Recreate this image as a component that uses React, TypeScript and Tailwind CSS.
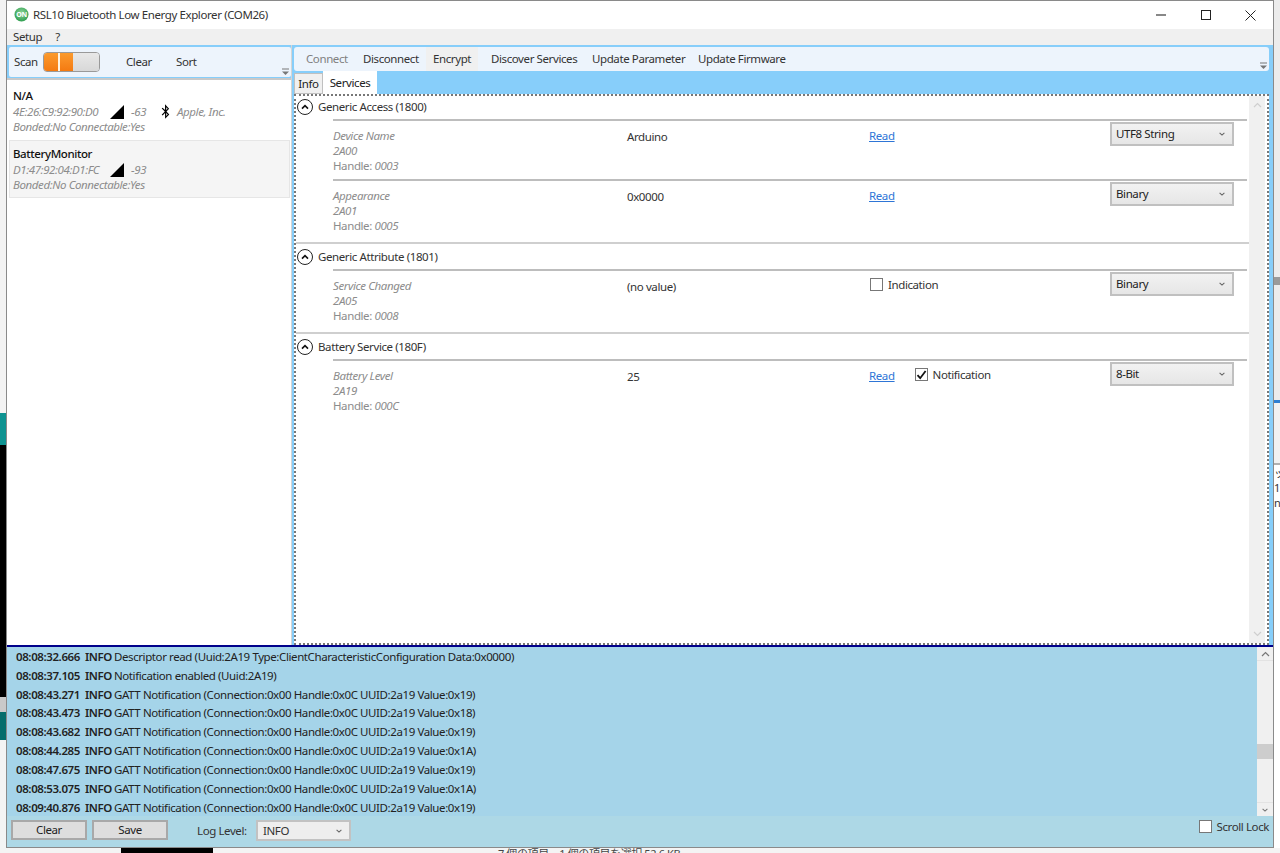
import React from "react";
import { FaBluetoothB } from "react-icons/fa";

const ChevDown = ({ c = "#666" }: { c?: string }) => (
  <svg width="6" height="4" viewBox="0 0 6 4" fill="none" stroke={c} strokeWidth="1.1"><path d="M.6.8L3 3.1 5.4.8" /></svg>
);
const ChevUp = ({ c = "#bbb", w = 9 }: { c?: string; w?: number }) => (
  <svg width={w} height="6" viewBox="0 0 9 6" fill="none" stroke={c} strokeWidth="1.2"><path d="M1 5l3.5-3.5L8 5" /></svg>
);
const Signal = () => (
  <svg width="14" height="14" viewBox="0 0 14 14" className="shrink-0"><path d="M14 0v14H0z" fill="#000" /></svg>
);
const Overflow = () => (
  <svg width="7" height="7" viewBox="0 0 7 7" className="absolute right-[2px] bottom-[2px]">
    <path d="M0 1h7" stroke="#777" strokeWidth="1" /><path d="M0 3.5h7l-3.5 3.5z" fill="#777" />
  </svg>
);

const Select = ({ label }: { label: string }) => (
  <div className="w-[124px] h-[24px] flex items-center justify-between pl-[4px] pr-[7px] pb-[1px] border-2 border-[#c0c0c0] bg-gradient-to-b from-[#f2f2f2] to-[#e6e6e6] text-[#222] shrink-0">
    <span>{label}</span><ChevDown />
  </div>
);

const Section = ({ title, h, last, children }: { title: string; h: string; last?: boolean; children: React.ReactNode }) => (
  <div className={last ? "" : "border-b-2 border-[#cfcfcf]"}>
    <div className={`flex items-center pl-[1px] ${h}`}>
      <div className="w-[16px] h-[16px] rounded-full border border-[#222] flex items-center justify-center mr-[5px]">
        <svg width="8" height="6" viewBox="0 0 8 6" fill="none" stroke="#111" strokeWidth="1.6"><path d="M1 4.6l3-3 3 3" /></svg>
      </div>
      <span className="text-[#333]">{title}</span>
    </div>
    {children}
  </div>
);

const Char = ({ name, id, handle, value, action, fmt, h = "h-[60px]" }: { name: string; id: string; handle: string; value: string; action?: React.ReactNode; fmt: string; h?: string }) => (
  <div className={`ml-[37px] mr-[2px] border-t-2 border-[#bdbdbd] flex ${h}`}>
    <div className="w-[294px] pt-[7px] text-[#8c8c8c] leading-[15px] shrink-0">
      <div className="italic">{name}</div>
      <div className="italic">{id}</div>
      <div>Handle: <span className="italic">{handle}</span></div>
    </div>
    <div className="w-[242px] pt-[8px] text-[#333] leading-[15px] shrink-0">{value}</div>
    <div className="w-[241px] pt-[6px] leading-[15px] flex items-start shrink-0">{action}</div>
    <div className="pt-[1px]"><Select label={fmt} /></div>
  </div>
);

const ReadLink = () => <span className="text-[#2e75d6] underline pt-[1px]">Read</span>;

const Check = ({ on, label }: { on?: boolean; label: string }) => (
  <div className="flex items-center text-[#333]">
    <div className="w-[13px] h-[13px] border border-[#777] bg-white flex items-center justify-center mr-[5px]">
      {on && <svg width="11" height="10" viewBox="0 0 11 10" fill="none" stroke="#111" strokeWidth="1.8"><path d="M1.5 5.2l2.7 3L9.6 1" /></svg>}
    </div>
    {label}
  </div>
);

const Device = ({ name, addr, rssi, extra, cls }: { name: string; addr: string; rssi: string; extra?: boolean; cls: string }) => (
  <div className={cls}>
    <div className="font-medium text-[#111] leading-[16px]">{name}</div>
    <div className="italic text-[#8c8c8c] leading-[15px] flex items-center">
      <span className="w-[97px] shrink-0">{addr}</span>
      <Signal />
      <span className="ml-[7px] w-[30px]">{rssi}</span>
      {extra && <><FaBluetoothB className="text-black w-[9px] h-[15px] mr-[7px]" /><span>Apple, Inc.</span></>}
    </div>
    <div className="italic text-[#8c8c8c] leading-[15px]">Bonded:No Connectable:Yes</div>
  </div>
);

const logs: [string, string, string][] = [
  ["08:08:32.666", "INFO", "Descriptor read (Uuid:2A19 Type:ClientCharacteristicConfiguration Data:0x0000)"],
  ["08:08:37.105", "INFO", "Notification enabled (Uuid:2A19)"],
  ["08:08:43.271", "INFO", "GATT Notification (Connection:0x00 Handle:0x0C UUID:2a19 Value:0x19)"],
  ["08:08:43.473", "INFO", "GATT Notification (Connection:0x00 Handle:0x0C UUID:2a19 Value:0x18)"],
  ["08:08:43.682", "INFO", "GATT Notification (Connection:0x00 Handle:0x0C UUID:2a19 Value:0x19)"],
  ["08:08:44.285", "INFO", "GATT Notification (Connection:0x00 Handle:0x0C UUID:2a19 Value:0x1A)"],
  ["08:08:47.675", "INFO", "GATT Notification (Connection:0x00 Handle:0x0C UUID:2a19 Value:0x19)"],
  ["08:08:53.075", "INFO", "GATT Notification (Connection:0x00 Handle:0x0C UUID:2a19 Value:0x1A)"],
  ["08:09:40.876", "INFO", "GATT Notification (Connection:0x00 Handle:0x0C UUID:2a19 Value:0x19)"],
];

const Btn = ({ label }: { label: string }) => (
  <div className="w-[76px] h-[20px] border-2 border-[#a8a8a8] bg-[#dddddd] flex items-center justify-center text-[#222]">{label}</div>
);

export default function App() {
  return (
    <div className="w-[1280px] h-[853px] overflow-hidden flex flex-col bg-[#f2f2f2] font-['Noto_Sans','Noto_Sans_CJK_JP',sans-serif] text-[11.5px] tracking-[-0.4px] whitespace-nowrap">
      <div className="flex h-[848px] shrink-0">
        {/* desktop behind, left */}
        <div className="w-[6px] shrink-0 flex flex-col">
          <div className="h-[413px] bg-[#f3f3f3]" />
          <div className="h-[32px] bg-[#0e9391]" />
          <div className="h-[252px] bg-black" />
          <div className="h-[15px] bg-[#c9c9c9]" />
          <div className="h-[28px] bg-[#056d6b]" />
          <div className="flex-1 bg-[#f4f4f4]" />
        </div>

        {/* window */}
        <div className="w-[1268px] shrink-0 border border-[#8a8a8a] flex flex-col bg-white">
          <div className="h-[28px] shrink-0 flex items-center bg-white pl-[7px]">
            <svg width="15" height="15" viewBox="0 0 15 15" className="mr-[4px] -mt-[1px]">
              <defs><radialGradient id="g" cx="50%" cy="40%" r="60%"><stop offset="0%" stopColor="#8fd69a" /><stop offset="100%" stopColor="#2f9e4f" /></radialGradient></defs>
              <circle cx="7.5" cy="7.5" r="7" fill="url(#g)" />
              <text x="7.5" y="10" textAnchor="middle" fontSize="7" fontWeight="700" fill="#fff">ON</text>
            </svg>
            <span className="text-[#333]">RSL10 Bluetooth Low Energy Explorer (COM26)</span>
            <div className="ml-auto flex items-center">
              <div className="w-[10px] h-[2px] bg-[#888] mr-[35px]" />
              <div className="w-[10px] h-[10px] border border-[#222] mr-[34px]" />
              <svg width="11" height="11" viewBox="0 0 11 11" stroke="#222" strokeWidth="1" className="mr-[17px]"><path d="M.5.5l10 10M10.5.5l-10 10" /></svg>
            </div>
          </div>
          <div className="h-[16px] shrink-0 bg-[#f0f0f0] flex items-center pl-[6px] text-[#333]">
            <span>Setup</span><span className="ml-[13px]">?</span>
          </div>

          <div className="h-[600px] shrink-0 flex">
            {/* left */}
            <div className="w-[284px] shrink-0 flex flex-col">
              <div className="h-[33px] bg-[#87cefa] p-[2px] pb-[1px] pr-0">
                <div className="relative h-full bg-[#edf4fc] rounded-[2px] flex items-center pl-[5px] text-[#333]">
                  <span className="w-[24px]">Scan</span>
                  <div className="ml-[5px] w-[57px] h-[20px] rounded-[4px] border border-[#999] flex overflow-hidden">
                    <div className="w-[29px] bg-gradient-to-b from-[#fb9a2c] to-[#f47a10] flex justify-center"><div className="w-[2px] bg-[#fff3e0]" /></div>
                    <div className="flex-1 bg-gradient-to-b from-[#e8e8e8] to-[#d8d8d8]" />
                  </div>
                  <span className="ml-[26px] w-[26px]">Clear</span>
                  <span className="ml-[24px]">Sort</span>
                  <Overflow />
                </div>
              </div>
              <div className="flex-1 border-t-2 border-[#c9c9c9] bg-white pl-[2px] pr-[1px] pt-[8px]">
                <Device name="N/A" addr="4E:26:C9:92:90:D0" rssi="-63" extra cls="h-[52px] pl-[4px]" />
                <Device name="BatteryMonitor" addr="D1:47:92:04:D1:FC" rssi="-93" cls="h-[58px] bg-[#f5f5f5] border border-[#e6e6e6] pt-[5px] pl-[3px]" />
              </div>
            </div>
            {/* splitter */}
            <div className="w-[1px] bg-[#d5d5d5] shrink-0" />
            {/* right */}
            <div className="flex-1 bg-[#87cefa] pl-[2px] pr-[4px] pt-[2px] flex flex-col min-w-0">
              <div className="relative h-[24px] shrink-0 bg-[#edf4fc] rounded-[3px] flex items-center text-[#333]">
                <span className="ml-[12px] text-[#808080] w-[42px]">Connect</span>
                <span className="ml-[15px] w-[56px]">Disconnect</span>
                <span className="ml-[7px] px-[7px] w-[52px] h-full flex items-center bg-[#f0f0f0]">Encrypt</span>
                <span className="ml-[13px] w-[86px]">Discover Services</span>
                <span className="ml-[15px] w-[91px]">Update Parameter</span>
                <span className="ml-[15px]">Update Firmware</span>
                <Overflow />
              </div>
              <div className="h-[23px] shrink-0 flex items-end">
                <div className="w-[29px] h-[21px] bg-[#f0f0f0] border border-[#c0c0c0] flex items-center justify-center text-[#222]">Info</div>
                <div className="w-[54px] h-[23px] bg-white flex items-center justify-center text-[#222]">Services</div>
              </div>
              <div className="flex-1 bg-white border-2 border-dotted border-[#777] flex min-h-0">
                <div className="flex-1 min-w-0">
                  <Section title="Generic Access (1800)" h="h-[23px] pb-[2px]">
                    <Char name="Device Name" id="2A00" handle="0003" value="Arduino" fmt="UTF8 String" action={<ReadLink />} />
                    <Char name="Appearance" id="2A01" handle="0005" value="0x0000" fmt="Binary" action={<ReadLink />} h="h-[63px]" />
                  </Section>
                  <Section title="Generic Attribute (1801)" h="h-[25px]">
                    <Char name="Service Changed" id="2A05" handle="0008" value="(no value)" fmt="Binary" action={<div className="pl-[1px]"><Check label="Indication" /></div>} h="h-[63px]" />
                  </Section>
                  <Section title="Battery Service (180F)" h="h-[25px]" last>
                    <Char name="Battery Level" id="2A19" handle="000C" value="25" fmt="8-Bit" action={<div className="flex items-start"><ReadLink /><div className="ml-[20px]"><Check on label="Notification" /></div></div>} h="h-[63px]" />
                  </Section>
                </div>
                <div className="w-[16px] shrink-0 bg-[#f0f0f0] flex flex-col items-center justify-between py-[6px]">
                  <ChevUp c="#cfcfcf" />
                  <div className="rotate-180"><ChevUp c="#cfcfcf" /></div>
                </div>
                <div className="w-[2px] shrink-0" />
              </div>
            </div>
          </div>

          {/* log */}
          <div className="flex-1 border-t-2 border-[#00008b] bg-[#add8e6] flex flex-col min-h-0">
            <div className="h-[169px] shrink-0 flex bg-[#a5d4e9]">
              <div className="flex-1 pl-[9px] min-w-0">
                {logs.map((l, i) => (
                  <div key={i} className="h-[18.9px] flex items-center text-[#222]">
                    <span className="font-semibold">{l[0]}</span>
                    <span className="font-semibold ml-[5px] mr-[2px]">{l[1]}</span>
                    <span>{l[2]}</span>
                  </div>
                ))}
              </div>
              <div className="w-[16px] shrink-0 bg-[#f0f0f0] flex flex-col items-center relative">
                <div className="h-[14px] w-full flex items-center justify-center border-b border-[#e3e3e3]"><ChevUp c="#777" /></div>
                <div className="h-[83px]" />
                <div className="h-[15px] w-full bg-[#cdcdcd]" />
                <div className="flex-1" />
                <div className="h-[14px] w-full flex items-center justify-center border-t border-[#e3e3e3]"><ChevDown c="#777" /></div>
              </div>
            </div>
            <div className="flex-1 flex items-start pt-[4px] pl-[4px] text-[#333] bg-[#add8e6]">
              <Btn label="Clear" />
              <div className="ml-[5px]"><Btn label="Save" /></div>
              <span className="ml-[29px] mt-[2px] w-[49px]">Log Level:</span>
              <div className="ml-[10px] w-[95px] h-[21px] border-2 border-[#c2c2c2] bg-[#eeeeee] flex items-center justify-between pl-[5px] pr-[7px]">
                <span>INFO</span><ChevDown />
              </div>
              <div className="ml-auto mr-[4px] -mt-[2px]"><Check label="Scroll Lock" /></div>
            </div>
          </div>
        </div>

        {/* desktop behind, right */}
        <div className="w-[6px] shrink-0 flex flex-col bg-[#ececec] overflow-hidden text-[11px] leading-[15px] text-[#333]">
          <div className="h-[277px]" />
          <div className="h-[8px] bg-[#9a9a9a]" />
          <div className="h-[115px]" />
          <div className="h-[3px] bg-[#2f7fd1]" />
          <div className="h-[60px] bg-[#f1f1f1]" />
          <div className="h-[2px] bg-[#b0b0b0]" />
          <div className="bg-white"><div>ッ</div><div>18</div><div>n</div></div>
          <div className="flex-1 bg-white" />
        </div>
      </div>
      {/* desktop behind, bottom */}
      <div className="h-[5px] shrink-0 flex bg-[#f4f4f4] overflow-hidden text-[11px] leading-[12px] text-[#444]">
        <div className="w-[121px]" />
        <div className="w-[92px] bg-black" />
        <div className="w-[285px]" />
        <span>7 個の項目　1 個の項目を選択 52.6 KB</span>
      </div>
    </div>
  );
}
